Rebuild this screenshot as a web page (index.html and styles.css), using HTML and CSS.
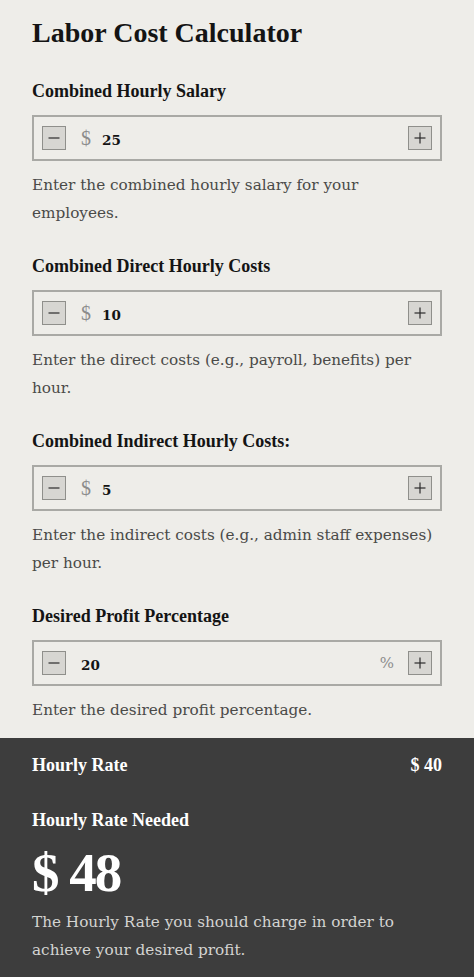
FILE: index.html
```html
<!DOCTYPE html>
<html lang="en">
<head>
<meta charset="utf-8">
<title>Labor Cost Calculator</title>
<link rel="stylesheet" href="styles.css">
</head>
<body>
<main class="calc">
  <section class="form">
    <h1 class="title">Labor Cost Calculator</h1>

    <div class="field">
      <label class="label">Combined Hourly Salary</label>
      <div class="input">
        <button class="btn" aria-label="decrease"><svg viewBox="0 0 24 24"><line x1="6" y1="12" x2="18" y2="12"/></svg></button>
        <span class="prefix">$</span>
        <span class="value">25</span>
        <button class="btn" aria-label="increase"><svg viewBox="0 0 24 24"><line x1="6" y1="12" x2="18" y2="12"/><line x1="12" y1="6" x2="12" y2="18"/></svg></button>
      </div>
      <p class="desc">Enter the combined hourly salary for your employees.</p>
    </div>

    <div class="field">
      <label class="label">Combined Direct Hourly Costs</label>
      <div class="input">
        <button class="btn" aria-label="decrease"><svg viewBox="0 0 24 24"><line x1="6" y1="12" x2="18" y2="12"/></svg></button>
        <span class="prefix">$</span>
        <span class="value">10</span>
        <button class="btn" aria-label="increase"><svg viewBox="0 0 24 24"><line x1="6" y1="12" x2="18" y2="12"/><line x1="12" y1="6" x2="12" y2="18"/></svg></button>
      </div>
      <p class="desc">Enter the direct costs (e.g., payroll, benefits) per hour.</p>
    </div>

    <div class="field">
      <label class="label">Combined Indirect Hourly Costs:</label>
      <div class="input">
        <button class="btn" aria-label="decrease"><svg viewBox="0 0 24 24"><line x1="6" y1="12" x2="18" y2="12"/></svg></button>
        <span class="prefix">$</span>
        <span class="value">5</span>
        <button class="btn" aria-label="increase"><svg viewBox="0 0 24 24"><line x1="6" y1="12" x2="18" y2="12"/><line x1="12" y1="6" x2="12" y2="18"/></svg></button>
      </div>
      <p class="desc">Enter the indirect costs (e.g., admin staff expenses) per hour.</p>
    </div>

    <div class="field">
      <label class="label">Desired Profit Percentage</label>
      <div class="input">
        <button class="btn" aria-label="decrease"><svg viewBox="0 0 24 24"><line x1="6" y1="12" x2="18" y2="12"/></svg></button>
        <span class="value value-plain">20</span>
        <span class="suffix">%</span>
        <button class="btn" aria-label="increase"><svg viewBox="0 0 24 24"><line x1="6" y1="12" x2="18" y2="12"/><line x1="12" y1="6" x2="12" y2="18"/></svg></button>
      </div>
      <p class="desc">Enter the desired profit percentage.</p>
    </div>
  </section>

  <section class="results">
    <div class="row">
      <span class="res-label">Hourly Rate</span>
      <span class="res-small">$ 40</span>
    </div>
    <div class="res-label needed">Hourly Rate Needed</div>
    <div class="big">$ 48</div>
    <p class="res-desc">The Hourly Rate you should charge in order to achieve your desired profit.</p>
  </section>
</main>
</body>
</html>
```

FILE: styles.css
```css
* { box-sizing: border-box; }
html, body {
  margin: 0;
  padding: 0;
  background: #eeede9;
}
body {
  font-family: "DejaVu Serif", "Liberation Serif", serif;
  color: #141414;
}
.calc {
  width: 474px;
  min-height: 977px;
  display: flex;
  flex-direction: column;
}
.form {
  padding: 15px 32px 14px 32px;
}
.title {
  margin: 0;
  font-family: "Liberation Serif", serif;
  font-size: 28px;
  line-height: 36px;
  font-weight: bold;
}
.field {
  display: flex;
  flex-direction: column;
}
.field + .field { margin-top: 27px; }
.title + .field { margin-top: 28px; }
.label {
  font-family: "Liberation Serif", serif;
  font-size: 18px;
  line-height: 24px;
  font-weight: bold;
}
.input {
  margin-top: 12px;
  height: 46px;
  border: 2px solid #a9a9a5;
  display: flex;
  align-items: center;
  padding: 0 8px;
}
.btn {
  width: 24px;
  height: 24px;
  padding: 0;
  margin: 0;
  border: 1px solid #8f8f8b;
  background: #d7d6d2;
  display: flex;
  align-items: center;
  justify-content: center;
  flex: none;
}
.btn svg {
  width: 22px;
  height: 22px;
  stroke: #2a2a2a;
  stroke-width: 1.3;
}
.prefix {
  margin-left: 15px;
  font-family: "Liberation Serif", serif;
  font-size: 20px;
  color: #8c8c8c;
}
.value {
  margin-left: 11px;
  font-size: 13.5px;
  font-weight: bold;
  flex: 1;
  color: #141414;
  padding-top: 3px;
}
.value-plain { margin-left: 15px; }
.suffix {
  font-size: 15px;
  color: #8c8c8c;
  margin-right: 14px;
}
.desc {
  margin: 10px 0 0 0;
  font-size: 15.25px;
  line-height: 28px;
  color: #4a4a48;
}
.results {
  flex: 1;
  background: #3d3d3d;
  color: #fff;
  padding: 15px 32px 13px 32px;
}
.row {
  display: flex;
  justify-content: space-between;
  align-items: center;
}
.res-label {
  font-family: "Liberation Serif", serif;
  font-size: 18px;
  line-height: 24px;
  font-weight: bold;
}
.res-small {
  font-family: "Liberation Serif", serif;
  font-size: 18px;
  line-height: 24px;
  font-weight: bold;
}
.needed { margin-top: 31px; }
.big {
  margin-top: 13px;
  font-family: "Liberation Serif", serif;
  font-size: 55px;
  line-height: 56px;
  font-weight: bold;
  letter-spacing: -2px;
  word-spacing: 0;
}
.res-desc {
  margin: 7px 0 0 0;
  font-size: 15.25px;
  line-height: 28px;
  color: #d4d4d2;
}
```
